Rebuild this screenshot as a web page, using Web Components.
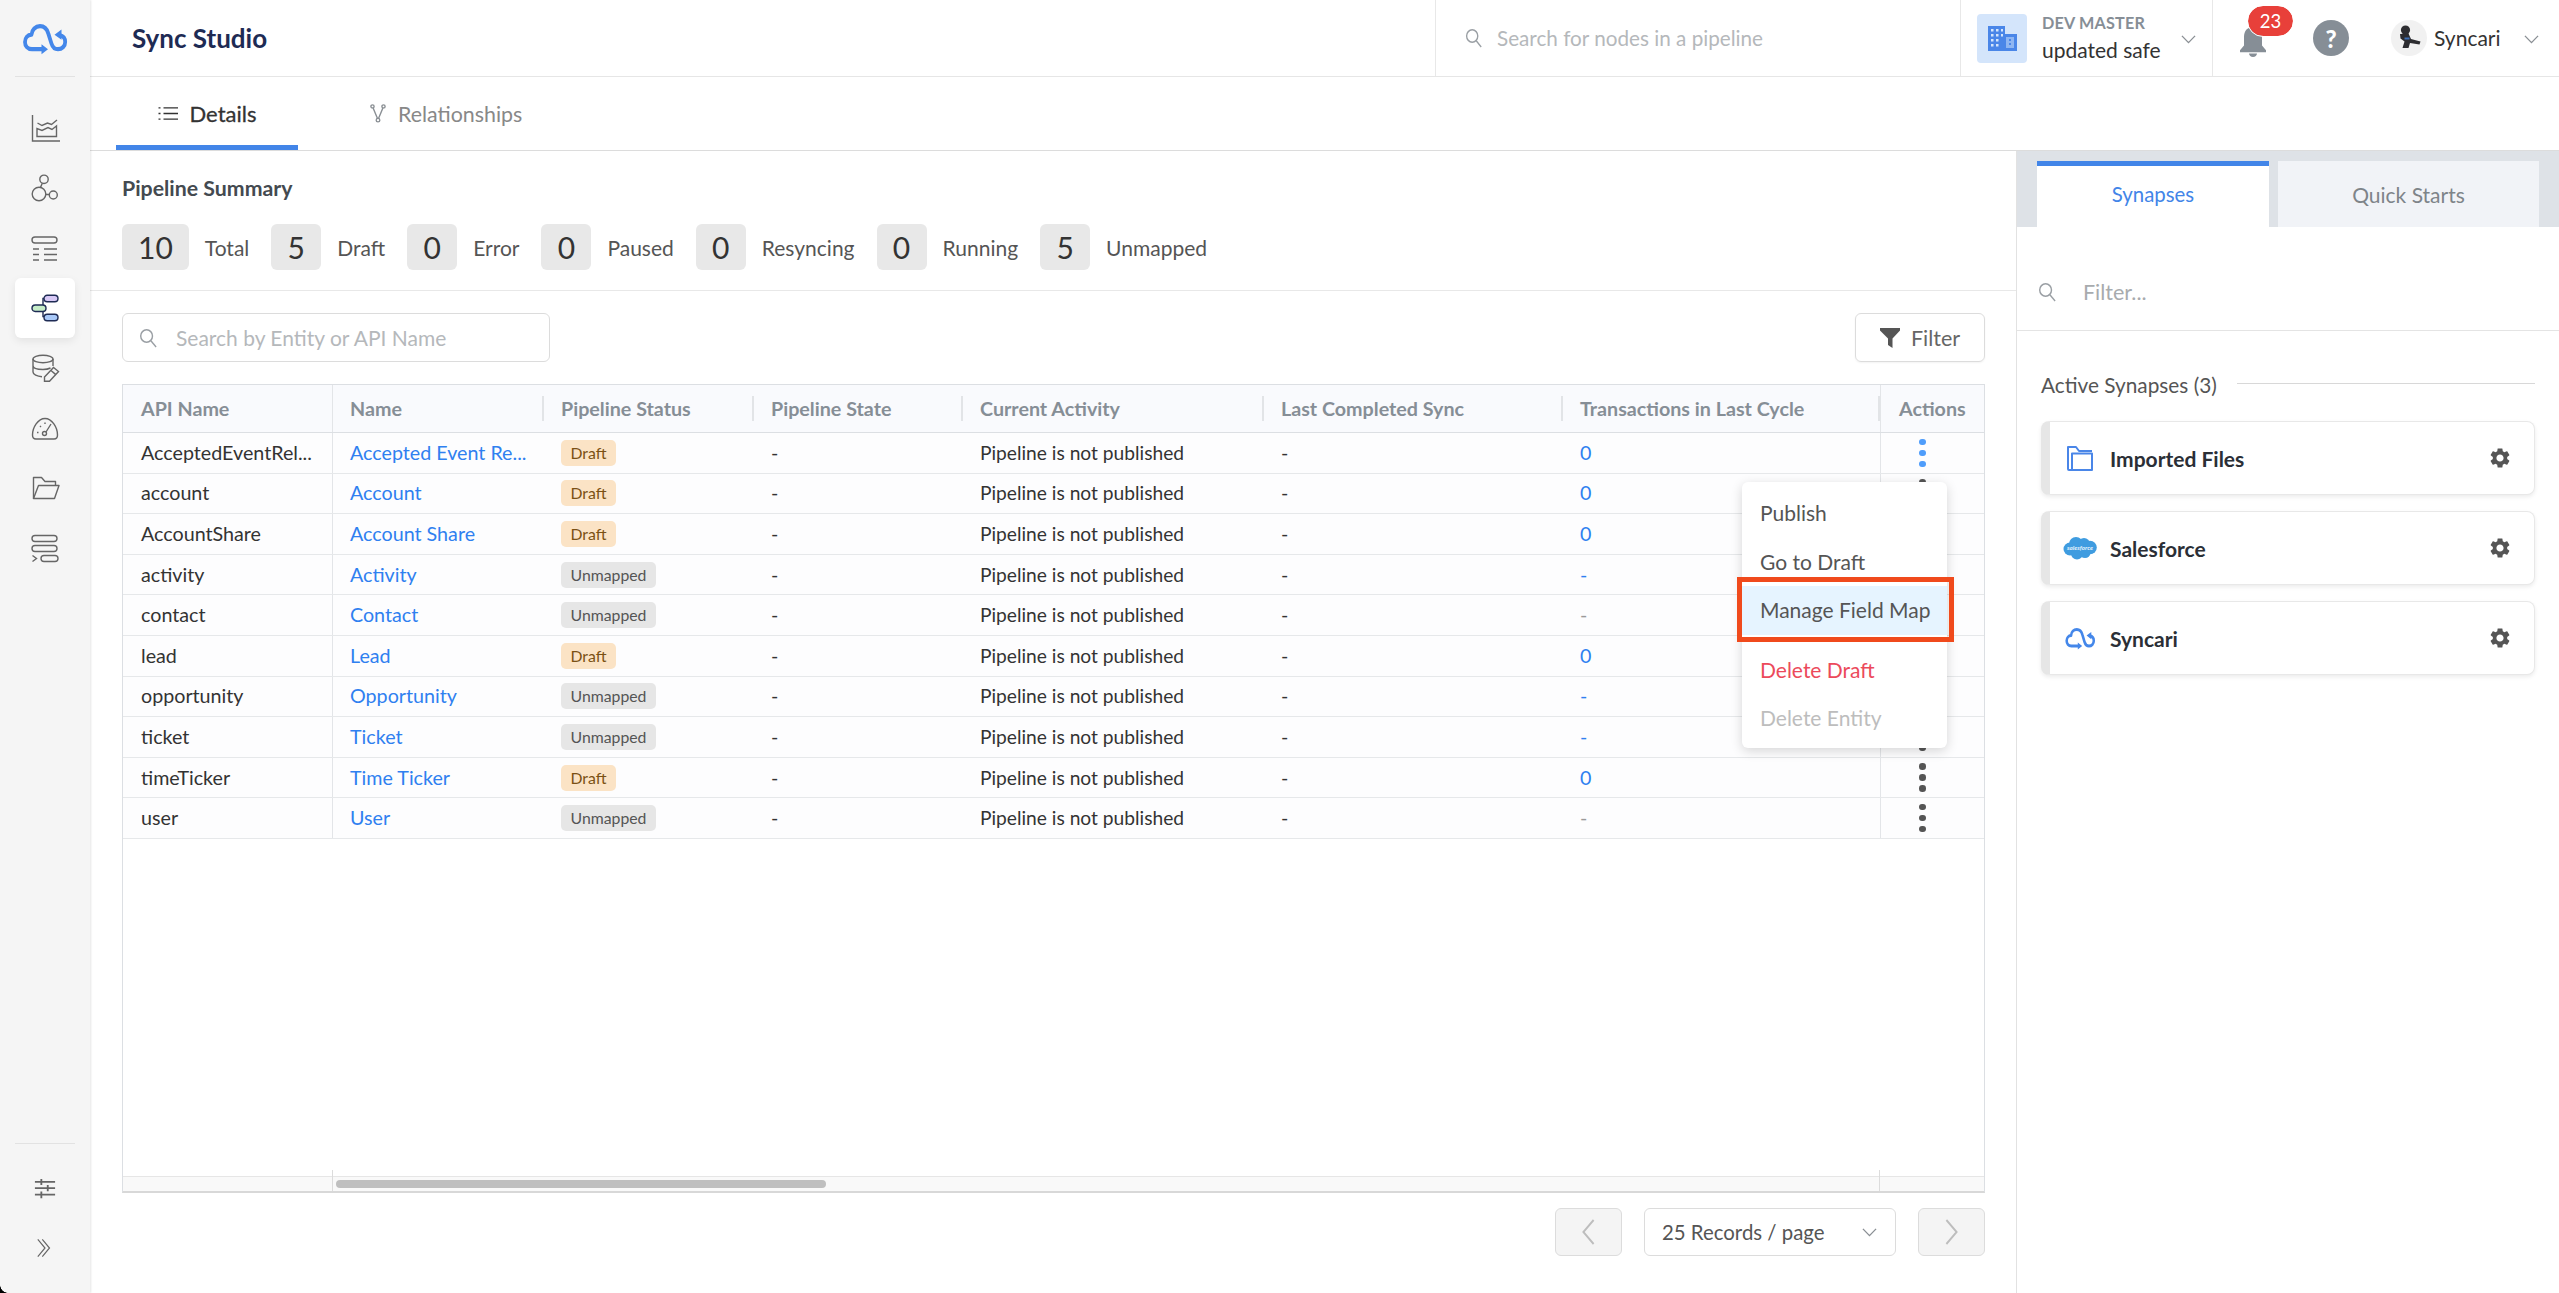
<!DOCTYPE html>
<html lang="en">
<head>
<meta charset="utf-8">
<title>Sync Studio</title>
<style>
  html,body{margin:0;padding:0;height:100%;background:#fff;overflow:hidden}
  body{font-family:Lato,"Noto Sans",sans-serif;font-size:20px;color:#333}
</style>
</head>
<body>
<app-shell>
  <side-rail slot="rail"></side-rail>
  <top-bar slot="top"></top-bar>
  <view-tabs slot="tabs"></view-tabs>
  <pipeline-pane slot="pane">
    <pipeline-summary></pipeline-summary>
    <pipeline-toolbar></pipeline-toolbar>
    <data-table>
      <action-menu></action-menu>
    </data-table>
    <table-pager></table-pager>
  </pipeline-pane>
  <synapse-panel slot="panel"></synapse-panel>
</app-shell>

<script>
const ICONS = {
  logo:{vb:'8 8 43 25',body:`<path fill="none" stroke="#4487ea" stroke-width="3.8" stroke-linecap="round" stroke-linejoin="round" d="M27 30.5H16C11.5 30.5 9 27.5 9 24C9 20.5 11.5 17.7 15.5 17.5C15.8 13 19.5 10 24 10C28.5 10 31 12.5 32.3 16.5L35.5 25.5C36.7 29 39 30.5 42 30.5C46 30.5 49.2 27.8 49.2 24C49.2 20.8 47.2 18.5 43.5 17.8"/><path fill="#4487ea" d="M25.5 26L32 30.5L25.5 35Z M45.5 13L38.5 17.5L45.5 22Z"/>`},
  chart:{vb:'0 0 28 28',body:`<g fill="none" stroke="#666" stroke-width="1.4"><path d="M1.5 1V27H29"/><path d="M6.5 9L11 11.5L16.5 9L20.5 10.5L26 6"/><path d="M6 22.5V14.5L11 16.5L17 13.5L21 15.5L25.5 12V22.5Z"/></g>`},
  nodes:{vb:'0 0 28 28',body:`<g fill="none" stroke="#666" stroke-width="1.4"><circle cx="8" cy="20" r="6.8"/><circle cx="13" cy="5.3" r="4.2"/><circle cx="22.3" cy="21" r="4"/><path d="M11.3 9.3L9.5 13.4M14.8 20.5H18.3"/></g>`},
  list:{vb:'0 0 28 28',body:`<g fill="none" stroke="#666" stroke-width="1.4"><rect x="1" y="3" width="25" height="6" rx="3"/><path d="M2 15H8M13 15H26M2 20.5H8M13 20.5H26M2 26H8M13 26H26"/></g>`},
  flow:{vb:'0 0 28 28',body:`<g stroke="#1e2b54" stroke-width="1.4"><path fill="none" d="M14 4.5H12V22.5H14M12 14H14"/><rect x="13" y="1.3" width="14" height="6.5" rx="3.2" fill="#d8c9f6"/><rect x="1" y="11" width="14" height="6.5" rx="3.2" fill="#c6edc8"/><rect x="13" y="20.2" width="14" height="6.5" rx="3.2" fill="#a9c9f9"/></g>`},
  db:{vb:'0 0 28 28',body:`<g fill="none" stroke="#666" stroke-width="1.4"><ellipse cx="12" cy="5" rx="10" ry="3.8"/><path d="M2 5V18C2 20.5 6 22.5 11 22.7M22 5V12M2 11.5C2 14 6.5 15.5 12 15.5C15 15.5 17.5 15 19.5 14"/><path fill="#f5f5f5" d="M13.5 23L22.5 13.5L27.5 17.5L18.5 27.3H13.5Z"/><path d="M20 16.5L24.8 20.6"/></g>`},
  gauge:{vb:'0 0 28 28',body:`<g fill="none" stroke="#666" stroke-width="1.4"><path d="M5 25C2.5 25 1.5 23.5 1.5 21C1.5 13.5 7 4.5 14 4.5C21 4.5 26.5 13.5 26.5 21C26.5 23.5 25.5 25 23 25Z"/><circle cx="13.5" cy="19.5" r="2"/><path d="M15 18L20 10M6 18.5H7.5M9 12L10 13M14 8.5V10"/></g>`},
  folder:{vb:'0 0 28 28',body:`<g fill="none" stroke="#666" stroke-width="1.4" stroke-linejoin="round"><path d="M2.5 24.5V3.5H10.5L14 7.5H24.5V11.5"/><path d="M2.5 24.5L7.5 11.5H28L23.5 24.5Z"/></g>`},
  stack:{vb:'0 0 28 28',body:`<g fill="none" stroke="#666" stroke-width="1.4"><rect x="1" y="1.5" width="25" height="6" rx="3"/><rect x="1" y="11.5" width="25" height="6" rx="3"/><rect x="10" y="21.5" width="17" height="6" rx="3"/><path d="M1.5 21.5L5.5 24.5L1.5 27.5"/></g>`},
  sliders:{vb:'0 0 24 24',body:`<g fill="none" stroke="#666" stroke-width="2"><path d="M1 4.5H23M8 1V8M1 11.5H23M15 8V15M1 19H23M8 15.5V23"/></g>`},
  chevrons:{vb:'0 0 20 22',body:`<g fill="none" stroke="#666" stroke-width="1.3"><path d="M2 1.5L10 11L2 20.5M7 1.5L15 11L7 20.5"/></g>`},
  tablist:{vb:'0 0 20 16',body:`<g fill="none" stroke="#333" stroke-width="1.5"><path d="M5.5 2H20M5.5 8H20M5.5 14H20"/><path d="M.5 2H2.5M.5 8H2.5M.5 14H2.5"/></g>`},
  branch:{vb:'0 0 16 20',body:`<g fill="none" stroke="#8a8f94" stroke-width="1.4"><circle cx="2.5" cy="2.5" r="1.6"/><circle cx="13.5" cy="2.5" r="1.6"/><circle cx="8" cy="17" r="1.8"/><path d="M3 4L7.5 15.2M13 4L8.5 15.2"/></g>`},
  search:{vb:'0 0 20 20',body:`<g fill="none" stroke="#9a9fa4" stroke-width="1.5"><circle cx="8" cy="8" r="6.2"/><path d="M12.5 12.8L18 19"/></g>`},
  chev:{vb:'0 0 16 10',body:`<path fill="none" stroke="#8a8f94" stroke-width="1.4" d="M1 1L8 8.5L15 1"/>`},
  building:{vb:'0 0 29 25',body:`<path fill="#4a86e8" d="M0 0H17V8H29V25H0Z"/><g fill="#d4e5fb"><path d="M3 3h2.5v2.5H3zM8 3h2.5v2.5H8zM13 3h2v2.5h-2zM3 8h2.5v2.5H3zM8 8h2.5v2.5H8zM13 8h2v2.5h-2zM3 13h2.5v2.5H3zM8 13h2.5v2.5H8zM3 18h2.5v2.5H3zM8 18h2.5v2.5H8z"/><path fill="#8fb6f2" d="M18 11h8v11h-8z"/></g><path fill="#4a86e8" d="M21 13h2v2h-2zM21 17h2v2h-2z"/>`},
  bell:{vb:'0 0 28 32',body:`<path fill="#868e96" d="M14 1C8 1 5 5.5 5 11V20L1 25V27H27V25L23 20V11C23 5.5 20 1 14 1Z"/><path fill="#868e96" d="M10 28.5H18C18 30.5 16.2 32 14 32C11.8 32 10 30.5 10 28.5Z"/>`},
  avatar:{vb:'0 0 36 36',body:`<circle cx="18" cy="18" r="18" fill="#f1f1f1"/><g fill="#2c2c30"><circle cx="14.5" cy="10" r="4.6"/><path d="M9 14L17.5 13.5L20 19L29.5 21.5L28.5 24.5L19 23L17.5 28H11.5L13.5 21.5L9.5 18.5Z"/></g><path fill="#3d6fb5" d="M13.5 17.5H18.5V19.5H13.5Z"/>`},
  funnel:{vb:'0 0 20 20',body:`<path fill="#555" d="M0 0H20V2.5L12.5 10.5V20L8 17V10.5L0 2.5Z"/>`},
  filefolder:{vb:'0 0 26 26',body:`<g fill="none" stroke="#4a86e8" stroke-width="2" stroke-linejoin="round"><path d="M5 25H2C1.4 25 1 24.5 1 24V2H9L12 6H25"/><path d="M5 25V8.5H25V25Z"/></g>`},
  gear:{vb:'0 0 24 24',body:`<path fill="#555" d="M19.14 12.94c.04-.3.06-.61.06-.94 0-.32-.02-.64-.07-.94l2.03-1.58c.18-.14.23-.41.12-.61l-1.92-3.32c-.12-.22-.37-.29-.59-.22l-2.39.96c-.5-.38-1.03-.7-1.62-.94l-.36-2.54c-.04-.24-.24-.41-.48-.41h-3.84c-.24 0-.43.17-.47.41l-.36 2.54c-.59.24-1.13.57-1.62.94l-2.39-.96c-.22-.08-.47 0-.59.22L2.74 8.87c-.12.21-.08.47.12.61l2.03 1.58c-.05.3-.09.63-.09.94s.02.64.07.94l-2.03 1.58c-.18.14-.23.41-.12.61l1.92 3.32c.12.22.37.29.59.22l2.39-.96c.5.38 1.03.7 1.62.94l.36 2.54c.05.24.24.41.48.41h3.84c.24 0 .44-.17.47-.41l.36-2.54c.59-.24 1.13-.56 1.62-.94l2.39.96c.22.08.47 0 .59-.22l1.92-3.32c.12-.22.07-.47-.12-.61l-2.01-1.58zM12 15.6c-1.98 0-3.6-1.62-3.6-3.6s1.62-3.6 3.6-3.6 3.6 1.62 3.6 3.6-1.62 3.6-3.6 3.6z"/>`},
  sfdc:{vb:'0 0 34 24',body:`<g fill="#3f9ce0"><circle cx="13" cy="8" r="7"/><circle cx="21" cy="8" r="6"/><circle cx="27" cy="11.5" r="6.8"/><circle cx="7" cy="13" r="6.5"/><circle cx="14" cy="17.5" r="6"/><circle cx="22" cy="16.5" r="5.5"/></g><text x="17" y="13.5" text-anchor="middle" font-family="Lato,sans-serif" font-size="6.2" font-style="italic" fill="#e8f4fd">salesforce</text>`},
  left:{vb:'0 0 14 26',body:`<path fill="none" stroke="#bdbdbd" stroke-width="2" d="M12.5 1L1.5 13L12.5 25"/>`},
  right:{vb:'0 0 14 26',body:`<path fill="none" stroke="#bdbdbd" stroke-width="2" d="M1.5 1L12.5 13L1.5 25"/>`}
};
class UiIcon extends HTMLElement{
  connectedCallback(){
    const i=ICONS[this.getAttribute('name')];
    const w=this.getAttribute('w')||28,h=this.getAttribute('h')||w;
    if(!this.shadowRoot)this.attachShadow({mode:'open'});
    this.shadowRoot.innerHTML=`<style>:host{display:block;flex:none;width:${w}px;height:${h}px;line-height:0}svg{display:block;width:100%;height:100%;overflow:visible}</style><svg viewBox="${i.vb}" preserveAspectRatio="none">${i.body}</svg>`;
  }
}
customElements.define('ui-icon',UiIcon);

function define(tag,html,extra){
  const t=document.createElement('template');t.innerHTML=html;
  customElements.define(tag,class extends HTMLElement{
    constructor(){super();this.attachShadow({mode:'open'}).appendChild(t.content.cloneNode(true));}
    connectedCallback(){extra&&extra(this,this.shadowRoot);}
  });
}

define('app-shell',`<style>
:host{display:grid;grid-template-columns:90px 2469px;height:1293px;width:2559px;position:relative;overflow:hidden}
.rail{display:flex;position:relative;z-index:2}
.body{display:flex;min-height:0}
main{display:grid;grid-template-columns:2469px;grid-template-rows:77px 74px minmax(0,1fr);min-width:0;height:1293px}
.corner{position:absolute;left:0;bottom:0;width:8px;height:8px;z-index:5;background:radial-gradient(circle at 100% 0,transparent 7.5px,#000 8px)}
</style>
<div class="rail"><slot name="rail"></slot></div>
<main><div class="top"><slot name="top"></slot></div><div class="tabs"><slot name="tabs"></slot></div>
<div class="body"><slot name="pane"></slot><slot name="panel"></slot></div></main>
<div class="corner"></div>`);

define('rail-item',`<style>
:host{display:flex;width:60px;height:60px;align-items:center;justify-content:center;border-radius:6px}
:host([active]){background:#fff;box-shadow:0 3px 8px rgba(0,0,0,.08)}
</style><slot></slot>`);

define('side-rail',`<style>
:host{display:flex;flex-direction:column;align-items:center;width:90px;height:1293px;background:#f5f5f5;box-shadow:1px 0 2px rgba(0,0,0,.10);box-sizing:border-box}
.logo{height:76px;display:flex;align-items:center;justify-content:center;width:60px;border-bottom:1px solid #e2e2e2;flex:none;box-sizing:content-box}
nav{padding-top:21px;display:flex;flex-direction:column;flex:1}
.foot{border-top:1px solid #e2e2e2;padding:14px 0 15px;width:60px}
</style>
<div class="logo"><ui-icon name="logo" w="43" h="28"></ui-icon></div>
<nav>
<rail-item><ui-icon name="chart"></ui-icon></rail-item>
<rail-item><ui-icon name="nodes"></ui-icon></rail-item>
<rail-item><ui-icon name="list"></ui-icon></rail-item>
<rail-item active><ui-icon name="flow"></ui-icon></rail-item>
<rail-item><ui-icon name="db"></ui-icon></rail-item>
<rail-item><ui-icon name="gauge"></ui-icon></rail-item>
<rail-item><ui-icon name="folder"></ui-icon></rail-item>
<rail-item><ui-icon name="stack"></ui-icon></rail-item>
</nav>
<div class="foot">
<rail-item><ui-icon name="sliders" w="22" h="21"></ui-icon></rail-item>
<rail-item><ui-icon name="chevrons" w="18" h="20"></ui-icon></rail-item>
</div>`);

define('top-bar',`<style>
:host{display:flex;height:77px;border-bottom:1px solid #e6e6e6;box-sizing:border-box;align-items:stretch;background:#fff}
h1{margin:0;flex:1;padding-left:42px;font:700 26px/76px Lato,sans-serif;color:#1e2b54}
.search{width:525px;box-sizing:border-box;border-left:1px solid #e8e8e8;display:flex;align-items:center;padding-left:29px;gap:14px;color:#b5b8bb;font-size:20.7px}
.env{width:253px;box-sizing:border-box;border-left:1px solid #e8e8e8;border-right:1px solid #e8e8e8;display:flex;align-items:center;padding-left:16px;position:relative}
.tile{width:50px;height:49px;border-radius:4px;background:#d4e5fb;display:flex;align-items:center;justify-content:center;margin-right:15px}
.lbl{font-size:16.2px;font-weight:700;color:#868e96;line-height:20px;letter-spacing:.2px}
.val{font-size:21px;line-height:26px;color:#333;margin-top:4px}
.caret{position:absolute;right:16px;top:35px}
.right{width:346px;flex:none;position:relative;display:flex;align-items:center}
.bellwrap{position:absolute;left:26px;top:26px}
.badge{position:absolute;left:35px;top:6px;width:45px;height:30px;border-radius:15px;background:#e8403a;color:#fff;font-size:18.5px;display:flex;align-items:center;justify-content:center;outline:1px solid #fff}
.help{position:absolute;left:100px;top:20px;width:36px;height:36px;border-radius:50%;background:#868e96;color:#fff;font-weight:900;font-size:24px;display:flex;align-items:center;justify-content:center}
.av{position:absolute;left:178px;top:20px}
.name{position:absolute;left:221px;top:0;line-height:76px;font-size:21px;color:#333}
.caret2{position:absolute;left:311px;top:35px}
</style>
<h1>Sync Studio</h1>
<div class="search"><ui-icon name="search" w="18" h="20"></ui-icon><span>Search for nodes in a pipeline</span></div>
<div class="env"><div class="tile"><ui-icon name="building" w="29" h="25"></ui-icon></div>
<div><div class="lbl">DEV MASTER</div><div class="val">updated safe</div></div>
<ui-icon class="caret" name="chev" w="15" h="9"></ui-icon></div>
<div class="right"><ui-icon class="bellwrap" name="bell" w="28" h="31"></ui-icon><div class="badge">23</div>
<div class="help">?</div><ui-icon class="av" name="avatar" w="36" h="36"></ui-icon><div class="name">Syncari</div>
<ui-icon class="caret2" name="chev" w="15" h="9"></ui-icon></div>`);

define('view-tabs',`<style>
:host{display:flex;height:74px;border-bottom:1px solid #dcdcdc;box-sizing:border-box;padding-left:26px;background:#fff}
.t{display:flex;align-items:center;gap:12px;height:73px;box-sizing:border-box}
.a{width:182px;justify-content:center;color:#333;font-size:22px;border-bottom:5px solid #4285e8;padding-top:5px;-webkit-text-stroke:.3px #333}
.b{margin-left:72px;color:#888;font-size:21.4px}
</style>
<div class="t a"><ui-icon name="tablist" w="20" h="15"></ui-icon><span>Details</span></div>
<div class="t b"><ui-icon name="branch" w="16" h="19"></ui-icon><span>Relationships</span></div>`);

define('pipeline-pane',`<style>
:host{display:flex;flex-direction:column;width:1926px;flex:none;box-sizing:border-box;min-height:0}
</style><slot></slot>`);

define('sum-chip',`<style>
:host{display:flex;align-items:center;margin-right:22px;color:#555;font-size:21px}
b{font-weight:400;font-size:30px;color:#333;background:#e8e8e8;height:46px;border-radius:6px;padding:0 16px;min-width:18px;display:flex;align-items:center;justify-content:center;margin-right:16px}
</style><b></b><span><slot></slot></span>`,(el,s)=>{s.querySelector('b').textContent=el.getAttribute('n')});

define('pipeline-summary',`<style>
:host{display:block;height:140px;box-sizing:border-box;border-bottom:1px solid #e8e8e8;padding:24px 32px 0;background:#fff}
h2{margin:0;font:700 21.3px/26px Lato,sans-serif;color:#444a50}
div{display:flex;margin-top:23px}
</style><h2>Pipeline Summary</h2>
<div><sum-chip n="10">Total</sum-chip><sum-chip n="5">Draft</sum-chip><sum-chip n="0">Error</sum-chip><sum-chip n="0">Paused</sum-chip><sum-chip n="0">Resyncing</sum-chip><sum-chip n="0">Running</sum-chip><sum-chip n="5">Unmapped</sum-chip></div>`);

define('pipeline-toolbar',`<style>
:host{display:flex;justify-content:space-between;padding:22px 31px 22px 32px;height:93px;box-sizing:border-box}
.s{width:428px;height:49px;border:1px solid #dcdcdc;border-radius:6px;box-sizing:border-box;display:flex;align-items:center;padding-left:16px;gap:18px;color:#b5b8bb;font-size:21px}
.f{width:130px;height:49px;border:1px solid #dcdcdc;border-radius:6px;box-sizing:border-box;display:flex;align-items:center;justify-content:center;gap:11px;color:#666;font-size:21.5px;box-shadow:0 1px 2px rgba(0,0,0,.05)}
</style><div class="s"><ui-icon name="search" w="19" h="20"></ui-icon><span>Search by Entity or API Name</span></div>
<div class="f"><ui-icon name="funnel" w="20" h="20"></ui-icon><span>Filter</span></div>`);

define('status-badge',`<style>
:host{display:inline-flex;align-items:center;height:26px;border-radius:5px;padding:0 9.5px;font-size:15.8px}
:host([k=Draft]){background:#fbe3c5;color:#7a5114}
:host([k=Unmapped]){background:#e6e6e6;color:#555}
</style><slot></slot>`);

const COLS='210px 211px 210px 209px 301px 299px 317px 1fr';
const ROWS=[
 ['AcceptedEventRel...','Accepted Event Re...','Draft','0',1],
 ['account','Account','Draft','0',1],
 ['AccountShare','Account Share','Draft','0',1],
 ['activity','Activity','Unmapped','-',1],
 ['contact','Contact','Unmapped','-',0],
 ['lead','Lead','Draft','0',1],
 ['opportunity','Opportunity','Unmapped','-',1],
 ['ticket','Ticket','Unmapped','-',1],
 ['timeTicker','Time Ticker','Draft','0',1],
 ['user','User','Unmapped','-',0]
];
define('data-table',`<style>
:host{display:flex;flex-direction:column;position:relative;margin:0 31px 0 32px;height:809px;flex:none;box-sizing:border-box;border:1px solid #dcdfe3;border-bottom:2px solid #d8d8d8;background:#fff;width:1863px}
.h,.r{display:grid;grid-template-columns:${COLS};align-items:center}
.h{height:47px;background:#f9fafd;border-bottom:1px solid #dcdfe3;color:#868e96;font-weight:700;font-size:19.7px;flex:none}
.h>div{position:relative;padding-left:17px;height:47px;line-height:47px;white-space:nowrap;box-sizing:border-box}
.h>div:nth-child(n+2):nth-child(-n+7)::after{content:"";position:absolute;right:0;top:11px;height:25px;width:2px;background:#e2e4e7}
.h>div:nth-child(7)::after{right:17px}
.h>.b1,.r>.b1{padding-left:18px}
.r{height:39.6px;border-bottom:1px solid #e6e8ea;background:#fdfdfe;font-size:19.7px;color:#333;box-sizing:content-box;line-height:24px}
.r>div{padding-left:17px;white-space:nowrap;height:100%;display:flex;align-items:center;overflow:hidden;box-sizing:border-box}
.r>div.c5{font-size:19.2px}
.b1{border-right:1px solid #e3e5e8}
.b8{border-left:1px solid #e3e5e8}
.h>.b8{padding-left:18px}
.r>.b8{padding-left:38px;overflow:visible}
a{color:#2f80f0;text-decoration:none}
.m{color:#9a9a9a}
.spacer{flex:1}
.scroll{height:15px;flex:none;background:#f9f9f9;border-top:1px solid #e6e6e6;position:relative;box-sizing:border-box}
.scroll i{position:absolute;left:213px;top:3px;width:490px;height:8px;background:#bfbfbf;border-radius:4px}
.scroll u{position:absolute;top:-7px;bottom:0;width:1px;background:#dcdcdc}
.dots{display:flex;flex-direction:column;gap:4.5px;flex:none}
.dots span{display:block;width:6.5px;height:6.5px;border-radius:50%;background:#555}
.first .dots span{background:#4f9dfb}
</style>
<div class="h"><div class="b1">API Name</div><div>Name</div><div>Pipeline Status</div><div>Pipeline State</div><div>Current Activity</div><div>Last Completed Sync</div><div>Transactions in Last Cycle</div><div class="b8">Actions</div></div>
<div id="rows"></div>
<div class="spacer"></div>
<div class="scroll"><u style="left:209px"></u><u style="left:1756px"></u><i></i></div>
<slot></slot>`,(el,s)=>{
  if(s.getElementById('rows').childElementCount)return;
  s.getElementById('rows').innerHTML=ROWS.map((r,i)=>`<div class="r ${i==0?'first':''}"><div class="b1">${r[0]}</div><div><a>${r[1]}</a></div><div><status-badge k="${r[2]}">${r[2]}</status-badge></div><div>-</div><div class="c5">Pipeline is not published</div><div>-</div><div>${r[4]?`<a>${r[3]}</a>`:`<span class="m">${r[3]}</span>`}</div><div class="b8"><span class="dots"><span></span><span></span><span></span></span></div></div>`).join('');
});

define('action-menu',`<style>
:host{position:absolute;left:1619px;top:97px;width:205px;height:266px;box-sizing:border-box;background:#fff;border-radius:6px;box-shadow:0 3px 12px rgba(0,0,0,.16);padding-top:7px;z-index:3;color:#555;font-size:21px}
div.i{height:48.5px;line-height:48.5px;padding-left:18px;white-space:nowrap;position:relative}
.hl{background:#e6f4ff}
.hl::after{content:"";position:absolute;left:-5px;right:-7px;top:-9px;bottom:-7px;border:5px solid #f04a1c;pointer-events:none}
.gap{height:11px}
.del{color:#ec4a5b}.dis{color:#bdbdbd}
</style>
<div class="i">Publish</div><div class="i">Go to Draft</div><div class="i hl">Manage Field Map</div><div class="gap"></div><div class="i del">Delete Draft</div><div class="i dis">Delete Entity</div>`);

define('table-pager',`<style>
:host{display:flex;justify-content:flex-end;padding:15px 31px 0 0;gap:22px}
.b{width:67px;height:48px;box-sizing:border-box;border:1px solid #dcdcdc;border-radius:6px;background:#f4f4f4;display:flex;align-items:center;justify-content:center}
.sel{width:252px;height:48px;box-sizing:border-box;border:1px solid #dcdcdc;border-radius:6px;display:flex;align-items:center;justify-content:space-between;padding:0 18px 0 17px;color:#555;font-size:20.4px}
</style><div class="b"><ui-icon name="left" w="13" h="26"></ui-icon></div>
<div class="sel"><span>25 Records / page</span><ui-icon name="chev" w="15" h="9"></ui-icon></div>
<div class="b"><ui-icon name="right" w="13" h="26"></ui-icon></div>`);

define('synapse-card',`<style>
:host{display:flex;align-items:center;height:74px;box-sizing:border-box;width:494px;margin-bottom:16px;border:1px solid #e8e8e8;border-left:9px solid #e6e6e6;border-radius:8px;box-shadow:0 2px 4px rgba(0,0,0,.08);background:#fff;color:#2b2f36;font-size:21px;font-weight:700;position:relative}
.ic{width:60px;display:flex;justify-content:center;flex:none}
span{flex:1}
.g{margin-right:22px}
</style><div class="ic"><slot name="icon"></slot></div><span><slot></slot></span><ui-icon class="g" name="gear" w="24" h="24"></ui-icon>`);

define('synapse-panel',`<style>
:host{display:flex;flex-direction:column;flex:1;border-left:1px solid #e2e2e2;box-sizing:border-box;background:#fff}
.hd{height:76px;flex:none;background:#dee2e7;display:flex;padding:10px 0 0 20px;box-sizing:border-box;gap:9px}
.hd div{height:66px;box-sizing:border-box;display:flex;align-items:center;justify-content:center}
.on{width:232px;background:#fff;border-top:5px solid #4285e8;color:#4285e8;font-size:20.4px;padding-bottom:5px}
.off{width:261px;background:#f1f3f7;color:#7e8489;font-size:21px}
.fl{height:104px;box-sizing:border-box;flex:none;border-bottom:1px solid #e4e4e4;display:flex;align-items:center;padding:26px 0 0 21px;gap:26px;color:#a8abae;font-size:21.5px}
.ti{display:flex;align-items:center;gap:20px;padding:42px 24px 0 24px;font-size:20.8px;color:#555;line-height:24px}
.ti i{flex:1;height:1px;background:#d8d8d8;margin-top:-4px}
.ls{padding:24px 0 0 24px}
</style>
<div class="hd"><div class="on">Synapses</div><div class="off">Quick Starts</div></div>
<div class="fl"><ui-icon name="search" w="19" h="20"></ui-icon><span>Filter...</span></div>
<div class="ti"><span>Active Synapses (3)</span><i></i></div>
<div class="ls">
<synapse-card><ui-icon slot="icon" name="filefolder" w="26" h="26"></ui-icon>Imported Files</synapse-card>
<synapse-card><ui-icon slot="icon" name="sfdc" w="34" h="24"></ui-icon>Salesforce</synapse-card>
<synapse-card><ui-icon slot="icon" name="logo" w="29" h="20"></ui-icon>Syncari</synapse-card>
</div>`);
</script>
</body>
</html>
